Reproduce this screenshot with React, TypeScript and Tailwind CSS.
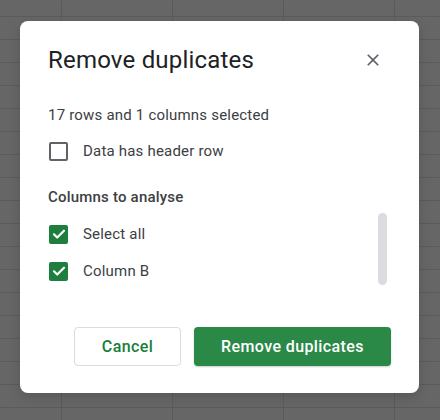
import { useState } from "react";

function Check({ checked, onToggle }: { checked: boolean; onToggle: () => void }) {
  return (
    <button
      onClick={onToggle}
      className={`w-[19px] h-[19px] rounded-[2px] flex items-center justify-center shrink-0 ${
        checked ? "bg-[#1e7e3e]" : "border-2 border-[#5f6368] bg-white"
      }`}
    >
      {checked && (
        <svg width="16" height="16" viewBox="0 0 24 24" fill="none">
          <path d="M4.5 12.5l4.8 4.8L19.5 7" stroke="white" strokeWidth="3.3" strokeLinecap="round" strokeLinejoin="round" />
        </svg>
      )}
    </button>
  );
}

export default function App() {
  const [header, setHeader] = useState(false);
  const [cols, setCols] = useState({ all: true, b: true });

  return (
    <div className="relative w-[440px] h-[420px] overflow-hidden bg-[#666666] bg-[linear-gradient(to_right,#5b5b5b_1px,transparent_1px),linear-gradient(to_bottom,#5b5b5b_1px,transparent_1px)] [background-size:111px_23px] [background-position:61px_16px] font-['Roboto',sans-serif]">
      <div className="absolute left-[20px] top-[21px] w-[399px] h-[372px] bg-white rounded-[8px] shadow-[0_4px_12px_rgba(0,0,0,0.15)] pl-[28px] pr-[28px] pt-[23px] flex flex-col">
        <div className="flex items-center justify-between h-[32px]">
          <h1 className="text-[24px] leading-[32px] text-[#202124] tracking-[0.2px]">Remove duplicates</h1>
          <button className="w-[24px] h-[24px] flex items-center justify-center mr-[6px] text-[#5f6368]">
            <svg width="20" height="20" viewBox="0 0 24 24" fill="currentColor">
              <path d="M19 6.41L17.59 5 12 10.59 6.41 5 5 6.41 10.59 12 5 17.59 6.41 19 12 13.41 17.59 19 19 17.59 13.41 12z" />
            </svg>
          </button>
        </div>

        <p className="mt-[29px] text-[15px] leading-[20px] tracking-[0.2px] text-[#3c4043]">17 rows and 1 columns selected</p>

        <label className="mt-[16px] flex items-center gap-[15px] h-[20px] pl-[1px]">
          <Check checked={header} onToggle={() => setHeader(!header)} />
          <span className="text-[15px] leading-[20px] tracking-[0.2px] text-[#3c4043]">Data has header row</span>
        </label>

        <h2 className="mt-[26px] text-[15px] leading-[20px] tracking-[0.2px] font-medium text-[#3c4043]">Columns to analyse</h2>

        <div className="mt-[6px] flex">
          <div className="flex-1 flex flex-col gap-[17px] pt-[11px]">
            <label className="flex items-center gap-[15px] h-[20px] pl-[1px]">
              <Check checked={cols.all} onToggle={() => setCols({ all: !cols.all, b: !cols.all })} />
              <span className="text-[15px] leading-[20px] tracking-[0.2px] text-[#3c4043]">Select all</span>
            </label>
            <label className="flex items-center gap-[15px] h-[20px] pl-[1px]">
              <Check checked={cols.b} onToggle={() => setCols({ ...cols, b: !cols.b })} />
              <span className="text-[15px] leading-[20px] tracking-[0.2px] text-[#3c4043]">Column B</span>
            </label>
          </div>
          <div className="w-[9px] h-[72px] rounded-full bg-[#dadce0] mr-[4px]" />
        </div>

        <div className="mt-auto mb-[27px] flex justify-end gap-[13px]">
          <button className="w-[107px] h-[39px] rounded-[4px] border border-[#dadce0] text-[16px] font-medium tracking-[0.4px] text-[#188038]">
            Cancel
          </button>
          <button className="w-[197px] h-[39px] rounded-[4px] bg-[#2a8947] shadow-[0_1px_2px_rgba(0,0,0,0.2)] text-[16px] font-medium tracking-[0.4px] text-white">
            Remove duplicates
          </button>
        </div>
      </div>
    </div>
  );
}
